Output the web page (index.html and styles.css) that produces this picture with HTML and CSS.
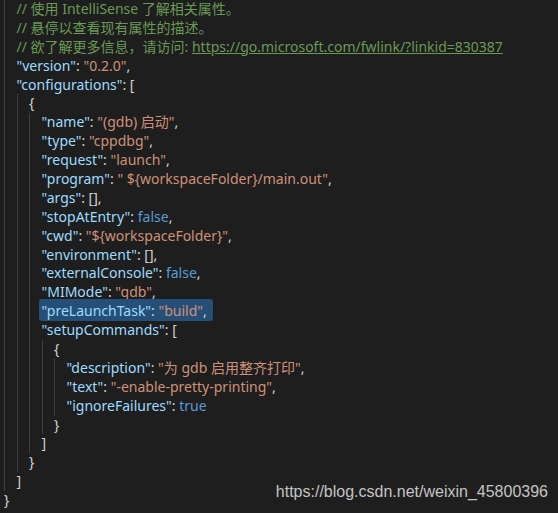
FILE: index.html
```html
<!DOCTYPE html>
<html>
<head>
<meta charset="utf-8">
<link rel="stylesheet" href="styles.css">
</head>
<body>
<div class="editor">
  <div class="block root">
    <div class="ln"><span class="c">// 使用 IntelliSense 了解相关属性。</span></div>
    <div class="ln"><span class="c">// 悬停以查看现有属性的描述。</span></div>
    <div class="ln"><span class="c">// 欲了解更多信息，请访问: <span class="u">https://go.microsoft.com/fwlink/?linkid=830387</span></span></div>
    <div class="ln"><span class="k">"version"</span><span class="p">: </span><span class="s">"0.2.0"</span><span class="p">,</span></div>
    <div class="ln"><span class="k">"configurations"</span><span class="p">: [</span></div>
    <div class="block">
      <div class="ln"><span class="p">{</span></div>
      <div class="block">
        <div class="ln"><span class="k">"name"</span><span class="p">: </span><span class="s">"(gdb) 启动"</span><span class="p">,</span></div>
        <div class="ln"><span class="k">"type"</span><span class="p">: </span><span class="s">"cppdbg"</span><span class="p">,</span></div>
        <div class="ln"><span class="k">"request"</span><span class="p">: </span><span class="s">"launch"</span><span class="p">,</span></div>
        <div class="ln"><span class="k">"program"</span><span class="p">: </span><span class="s">" ${workspaceFolder}/main.out"</span><span class="p">,</span></div>
        <div class="ln"><span class="k">"args"</span><span class="p">: [],</span></div>
        <div class="ln"><span class="k">"stopAtEntry"</span><span class="p">: </span><span class="b">false</span><span class="p">,</span></div>
        <div class="ln"><span class="k">"cwd"</span><span class="p">: </span><span class="s">"${workspaceFolder}"</span><span class="p">,</span></div>
        <div class="ln"><span class="k">"environment"</span><span class="p">: [],</span></div>
        <div class="ln"><span class="k">"externalConsole"</span><span class="p">: </span><span class="b">false</span><span class="p">,</span></div>
        <div class="ln"><span class="k">"MIMode"</span><span class="p">: </span><span class="s">"gdb"</span><span class="p">,</span></div>
        <div class="ln"><span class="sel"><span class="k">"preLaunchTask"</span><span class="p">: </span><span class="s">"build"</span><span class="p">,</span></span></div>
        <div class="ln"><span class="k">"setupCommands"</span><span class="p">: [</span></div>
        <div class="block">
          <div class="ln"><span class="p">{</span></div>
          <div class="block">
            <div class="ln"><span class="k">"description"</span><span class="p">: </span><span class="s">"为 gdb 启用整齐打印"</span><span class="p">,</span></div>
            <div class="ln"><span class="k">"text"</span><span class="p">: </span><span class="s">"-enable-pretty-printing"</span><span class="p">,</span></div>
            <div class="ln"><span class="k">"ignoreFailures"</span><span class="p">: </span><span class="b">true</span></div>
          </div>
          <div class="ln"><span class="p">}</span></div>
        </div>
        <div class="ln"><span class="p">]</span></div>
      </div>
      <div class="ln"><span class="p">}</span></div>
    </div>
    <div class="ln"><span class="p">]</span></div>
  </div>
  <div class="ln top"><span class="p">}</span></div>
  <div class="watermark">https://blog.csdn.net/weixin_45800396</div>
</div>
</body>
</html>
```

FILE: styles.css
```css
html, body {
  margin: 0;
  padding: 0;
  background: #1e1e1e;
}
.editor {
  position: relative;
  width: 558px;
  height: 513px;
  overflow: hidden;
  padding-left: 4px;
  box-sizing: border-box;
  font-family: "Noto Sans", "Noto Sans CJK SC", sans-serif;
  font-size: 14px;
  color: #d4d4d4;
}
.block {
  border-left: 1px solid #404040;
  padding-left: 11.5px;
}
.ln {
  height: 18.9px;
  line-height: 18.9px;
  white-space: pre;
}
.top {
  margin-left: 0;
}
.c { color: #6a9955; }
.u { text-decoration: underline; }
.k { color: #9cdcfe; }
.s { color: #ce9178; }
.p { color: #d4d4d4; }
.b { color: #569cd6; }
.sel {
  background: #264f78;
  border-radius: 3px;
  padding: 2px 6px 1px 3px;
  margin-left: -3px;
}
.watermark {
  position: absolute;
  right: 10px;
  top: 483px;
  font-family: "Liberation Sans", Arial, sans-serif;
  font-size: 16px;
  color: #c4c4c4;
}
```
